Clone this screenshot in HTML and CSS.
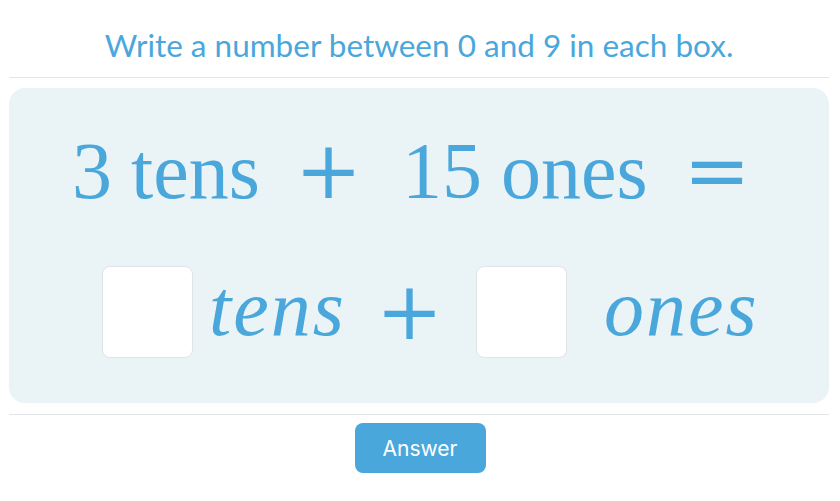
FILE: index.html
```html
<!DOCTYPE html>
<html>
<head>
<meta charset="utf-8">
<link rel="stylesheet" href="styles.css">
</head>
<body>
<div class="page">
  <h1 class="prompt">Write a number between 0 and 9 in each box.</h1>
  <div class="rule"></div>
  <div class="panel">
    <div class="row row-top">
      <span class="num">3</span><span class="word">tens</span>
      <span class="op plus">+</span>
      <span class="num">15</span><span class="word">ones</span>
      <span class="op eq">=</span>
    </div>
    <div class="row row-bottom">
      <span class="box"></span>
      <span class="it it-tens">tens</span>
      <span class="op plus2">+</span>
      <span class="box"></span>
      <span class="it it-ones">ones</span>
    </div>
  </div>
  <div class="rule rule-bottom"></div>
  <div class="actions">
    <button class="answer">Answer</button>
  </div>
</div>
</body>
</html>
```
FILE: styles.css
```css
html, body {
  margin: 0;
  padding: 0;
  background: #ffffff;
}

.page {
  padding: 0 11px 0 9px;
}

.prompt {
  margin: 0;
  height: 77px;
  box-sizing: border-box;
  padding-top: 29px;
  font-family: Lato, "Open Sans", sans-serif;
  font-weight: 400;
  font-size: 31.5px;
  line-height: 32px;
  color: #4aa7dc;
  text-align: center;
}

.rule {
  height: 1px;
  background: #e3e4e8;
}

.panel {
  margin-top: 10px;
  height: 315px;
  box-sizing: border-box;
  padding-top: 43px;
  background: #eaf3f6;
  border-radius: 16px;
  display: flex;
  flex-direction: column;
  gap: 55px;
}

.row {
  display: flex;
  align-items: center;
  color: #4aa7dc;
  font-family: "Liberation Serif", "Times New Roman", serif;
  font-size: 80px;
  line-height: 80px;
}

.row-top {
  height: 80px;
  padding-left: 63px;
}

.row-bottom {
  height: 92px;
  padding-left: 93px;
}

.num {
  margin-right: 19px;
}

.op {
  font-family: "DejaVu Serif", serif;
  font-size: 80px;
  line-height: 80px;
}

.plus {
  margin: 0 40px 0 35px;
}

.eq {
  margin-left: 36px;
}

.box {
  width: 89px;
  height: 90px;
  background: #ffffff;
  border: 1px solid #dfe4e9;
  border-radius: 8px;
  flex: none;
}

.it {
  font-style: italic;
  letter-spacing: 2px;
  margin-bottom: 8px;
}

.it-tens {
  margin-left: 16px;
  margin-right: 30px;
}

.plus2 {
  margin-right: 33px;
}

.it-ones {
  margin-left: 37px;
}

.rule-bottom {
  margin-top: 11px;
}

.actions {
  display: flex;
  justify-content: center;
  padding-top: 8px;
}

.answer {
  width: 131px;
  height: 50px;
  border: none;
  border-radius: 8px;
  background: #4aa7dc;
  color: #ffffff;
  font-family: Inter, "Noto Sans", sans-serif;
  font-size: 21px;
  font-weight: 400;
  padding: 0;
  margin-left: 2px;
}
```
